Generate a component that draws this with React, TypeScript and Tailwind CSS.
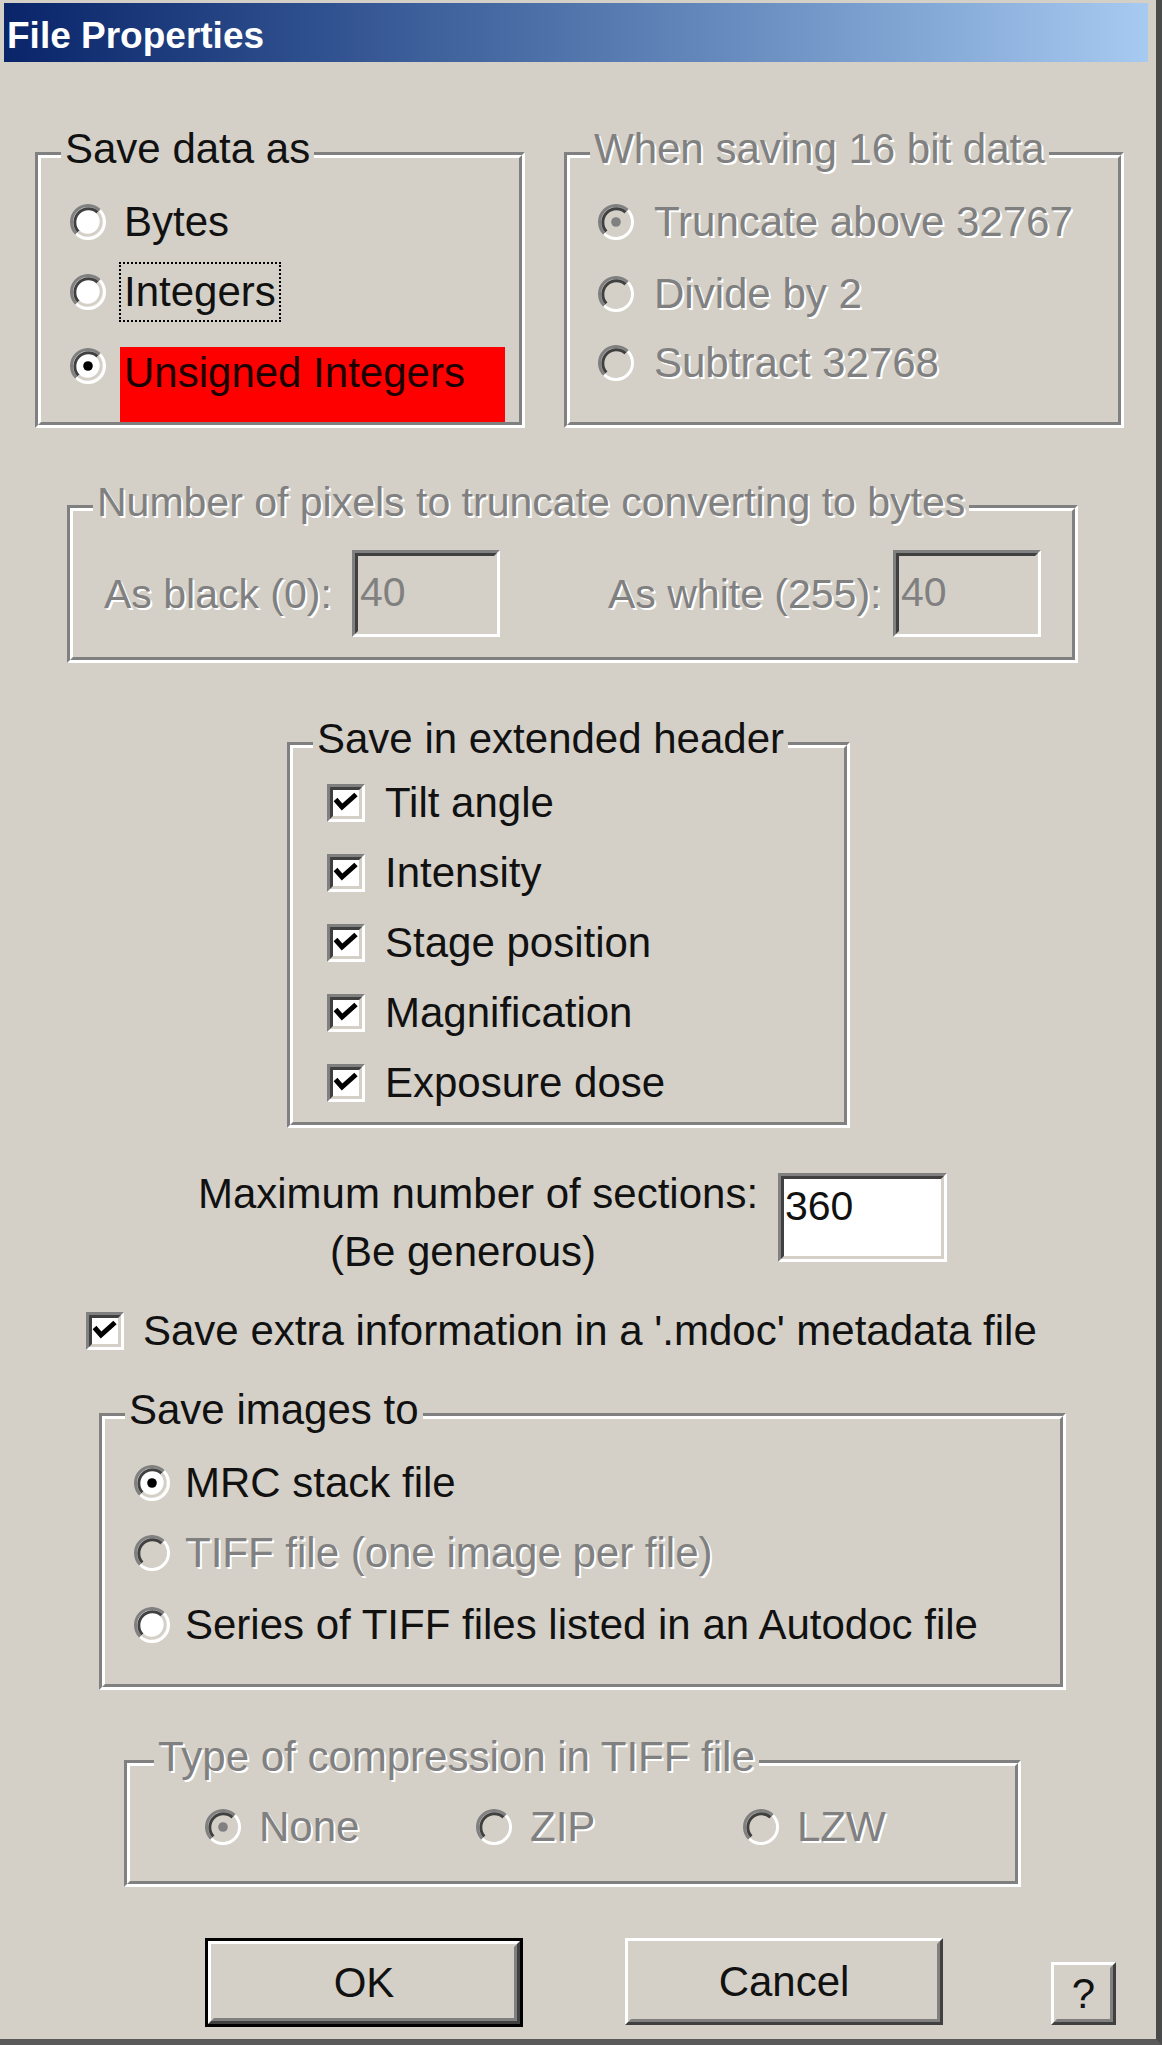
import React from "react";

/** Windows-classic palette */
const DIS = "text-[#808080] [text-shadow:2px_2px_0_#ffffff]";

function Radio({ checked = false, disabled = false }: { checked?: boolean; disabled?: boolean }) {
  return (
    <svg viewBox="0 0 12 12" className="h-[36px] w-[36px] shrink-0">
      <circle cx="6" cy="6" r="5" fill={disabled ? "#d4d0c8" : "#ffffff"} />
      <path d="M2.11 9.89 A5.5 5.5 0 0 1 9.89 2.11" fill="none" stroke="#808080" strokeWidth="1" />
      <path d="M9.89 2.11 A5.5 5.5 0 0 1 2.11 9.89" fill="none" stroke="#ffffff" strokeWidth="1" />
      <path d="M2.82 9.18 A4.5 4.5 0 0 1 9.18 2.82" fill="none" stroke="#404040" strokeWidth="1" />
      <path d="M9.18 2.82 A4.5 4.5 0 0 1 2.82 9.18" fill="none" stroke="#d4d0c8" strokeWidth="1" />
      {checked && <circle cx="6" cy="6" r="1.6" fill={disabled ? "#808080" : "#000000"} />}
    </svg>
  );
}

function CheckBox() {
  return (
    <div className="h-[38px] w-[38px] shrink-0 border-[3px] border-t-[#808080] border-l-[#808080] border-r-white border-b-white">
      <div className="h-full w-full border-[3px] border-t-[#404040] border-l-[#404040] border-r-[#d4d0c8] border-b-[#d4d0c8] bg-white">
        <svg viewBox="0 0 26 26" className="block h-full w-full">
          <path d="M2.5 9.5 L9 17 L23 4.5" stroke="#000" strokeWidth="5" fill="none" />
        </svg>
      </div>
    </div>
  );
}

function GroupBox({
  label,
  disabled,
  className,
  legendLeft = "left-[23px]",
  children,
}: {
  label: string;
  disabled?: boolean;
  className: string;
  legendLeft?: string;
  children?: React.ReactNode;
}) {
  return (
    <div
      className={`relative shrink-0 border-[3px] border-t-[#808080] border-l-[#808080] border-r-white border-b-white ${className}`}
    >
      <div className="h-full border-[3px] border-t-white border-l-white border-r-[#808080] border-b-[#808080]">
        {children}
      </div>
      <span
        className={`absolute -top-[30px] ${legendLeft} whitespace-nowrap bg-[#d4d0c8] px-[4px] leading-[48px] ${disabled ? DIS : ""}`}
      >
        {label}
      </span>
    </div>
  );
}

function Edit({ value, disabled, className }: { value: string; disabled?: boolean; className: string }) {
  return (
    <div
      className={`shrink-0 border-[3px] border-t-[#808080] border-l-[#808080] border-r-white border-b-white ${className}`}
    >
      <div
        className={`h-full border-[3px] border-t-[#404040] border-l-[#404040] border-r-[#d4d0c8] border-b-[#d4d0c8] ${
          disabled ? "bg-[#d4d0c8] pt-[12px] pl-[2px] text-[41px] text-[#808080]" : "bg-white pt-[3px] pl-[1px] text-[41px]"
        }`}
      >
        {value}
      </div>
    </div>
  );
}

function Button({ label, isDefault, className }: { label: string; isDefault?: boolean; className: string }) {
  const face = (
    <div className="h-full border-[3px] border-t-white border-l-white border-r-[#404040] border-b-[#404040]">
      <div className="flex h-full w-full items-center justify-center border-[3px] border-t-[#d4d0c8] border-l-[#d4d0c8] border-r-[#808080] border-b-[#808080]">
        {label}
      </div>
    </div>
  );
  return isDefault ? (
    <div className={`shrink-0 border-[3px] border-black ${className}`}>{face}</div>
  ) : (
    <div className={`shrink-0 ${className}`}>{face}</div>
  );
}

function RadioRow({
  label,
  checked,
  disabled,
  className,
  gap,
}: {
  label: string;
  checked?: boolean;
  disabled?: boolean;
  className: string;
  gap: string;
}) {
  return (
    <div className={`flex h-[40px] items-center ${className}`}>
      <Radio checked={checked} disabled={disabled} />
      <span className={`${gap} whitespace-nowrap ${disabled ? DIS : ""}`}>{label}</span>
    </div>
  );
}

function CheckRow({ label, className }: { label: string; className: string }) {
  return (
    <div className={`flex h-[40px] items-center ${className}`}>
      <CheckBox />
      <span className="ml-[20px] whitespace-nowrap">{label}</span>
    </div>
  );
}

export default function App() {
  return (
    <div className="h-[2045px] w-[1162px] overflow-hidden border-r-[6px] border-b-[6px] border-r-[#4a4a4a] border-b-[#5a5a5a] bg-[#d4d0c8] pt-[3px] pl-[4px] pr-[8px] font-['Liberation_Sans',Arial,sans-serif] text-[42px] leading-[48px] text-[#111]">
      {/* title bar */}
      <div className="flex h-[59px] items-center bg-gradient-to-r from-[#0a246a] to-[#a6caf0] pt-[5px] pl-[3px]">
        <span className="text-[37px] font-bold leading-none text-white">File Properties</span>
      </div>

      {/* top pair of groups */}
      <div className="ml-[31px] mt-[90px] flex">
        <GroupBox label="Save data as" className="h-[276px] w-[490px]">
          <div className="flex flex-col pl-[29px]">
            <RadioRow label="Bytes" className="mt-[44px]" gap="ml-[18px]" />
            <div className="mt-[30px] flex h-[40px] items-center">
              <Radio />
              <span className="ml-[13px] flex h-[60px] items-center border-2 border-dotted border-black px-[3px]">
                Integers
              </span>
            </div>
            <div className="mt-[35px] flex items-start">
              <div className="mt-[1px]">
                <Radio checked />
              </div>
              <div className="ml-[14px] h-[75px] w-[385px] bg-[#ff0000] pt-[2px] pl-[4px] text-[#1a0000]">
                Unsigned Integers
              </div>
            </div>
          </div>
        </GroupBox>

        <GroupBox label="When saving 16 bit data" disabled className="ml-[39px] h-[276px] w-[560px]">
          <div className="flex flex-col pl-[28px]">
            <RadioRow label="Truncate above 32767" checked disabled className="mt-[44px]" gap="ml-[20px]" />
            <RadioRow label="Divide by 2" disabled className="mt-[32px]" gap="ml-[20px]" />
            <RadioRow label="Subtract 32768" disabled className="mt-[29px]" gap="ml-[20px]" />
          </div>
        </GroupBox>
      </div>

      {/* truncation pixels */}
      <GroupBox
        label="Number of pixels to truncate converting to bytes"
        disabled
        className="ml-[63px] mt-[77px] h-[158px] w-[1011px] text-[41px]"
      >
        <div className="mt-[39px] flex items-center pl-[31px]">
          <span className={`w-[248px] whitespace-nowrap ${DIS}`}>As black (0):</span>
          <Edit value="40" disabled className="h-[87px] w-[148px]" />
          <span className={`ml-[108px] w-[285px] whitespace-nowrap ${DIS}`}>As white (255):</span>
          <Edit value="40" disabled className="h-[87px] w-[148px]" />
        </div>
      </GroupBox>

      {/* extended header */}
      <GroupBox label="Save in extended header" className="ml-[283px] mt-[79px] h-[386px] w-[563px]">
        <div className="flex flex-col pl-[34px]">
          <CheckRow label="Tilt angle" className="mt-[35px]" />
          <CheckRow label="Intensity" className="mt-[30px]" />
          <CheckRow label="Stage position" className="mt-[30px]" />
          <CheckRow label="Magnification" className="mt-[30px]" />
          <CheckRow label="Exposure dose" className="mt-[30px]" />
        </div>
      </GroupBox>

      {/* max sections */}
      <div className="ml-[168px] mt-[37px] flex items-start">
        <div className="w-[600px] text-center leading-[58px]">
          <div className="whitespace-nowrap pl-[12px]">Maximum number of sections:</div>
          <div className="whitespace-nowrap pr-[18px]">(Be generous)</div>
        </div>
        <Edit value="360" className="ml-[6px] mt-[8px] h-[89px] w-[169px]" />
      </div>

      {/* mdoc */}
      <div className="ml-[82px] mt-[30px] flex h-[40px] items-center">
        <CheckBox />
        <span className="ml-[19px] whitespace-nowrap">Save extra information in a '.mdoc' metadata file</span>
      </div>

      {/* save images to */}
      <GroupBox label="Save images to" className="ml-[95px] mt-[62px] h-[277px] w-[967px]">
        <div className="flex flex-col pl-[29px]">
          <RadioRow label="MRC stack file" checked className="mt-[44px]" gap="ml-[15px]" />
          <RadioRow label="TIFF file (one image per file)" disabled className="mt-[30px]" gap="ml-[15px]" />
          <RadioRow label="Series of TIFF files listed in an Autodoc file" className="mt-[32px]" gap="ml-[15px]" />
        </div>
      </GroupBox>

      {/* compression */}
      <GroupBox
        label="Type of compression in TIFF file"
        disabled
        legendLeft="left-[27px]"
        className="ml-[120px] mt-[70px] h-[127px] w-[897px]"
      >
        <div className="mt-[41px] flex pl-[75px]">
          <RadioRow label="None" checked disabled className="w-[271px]" gap="ml-[18px]" />
          <RadioRow label="ZIP" disabled className="w-[267px]" gap="ml-[18px]" />
          <RadioRow label="LZW" disabled className="" gap="ml-[18px]" />
        </div>
      </GroupBox>

      {/* buttons */}
      <div className="ml-[201px] mt-[51px] flex items-start">
        <Button label="OK" isDefault className="h-[89px] w-[318px]" />
        <Button label="Cancel" className="ml-[102px] h-[87px] w-[318px]" />
        <Button label="?" className="ml-[108px] mt-[24px] h-[63px] w-[65px]" />
      </div>
    </div>
  );
}
